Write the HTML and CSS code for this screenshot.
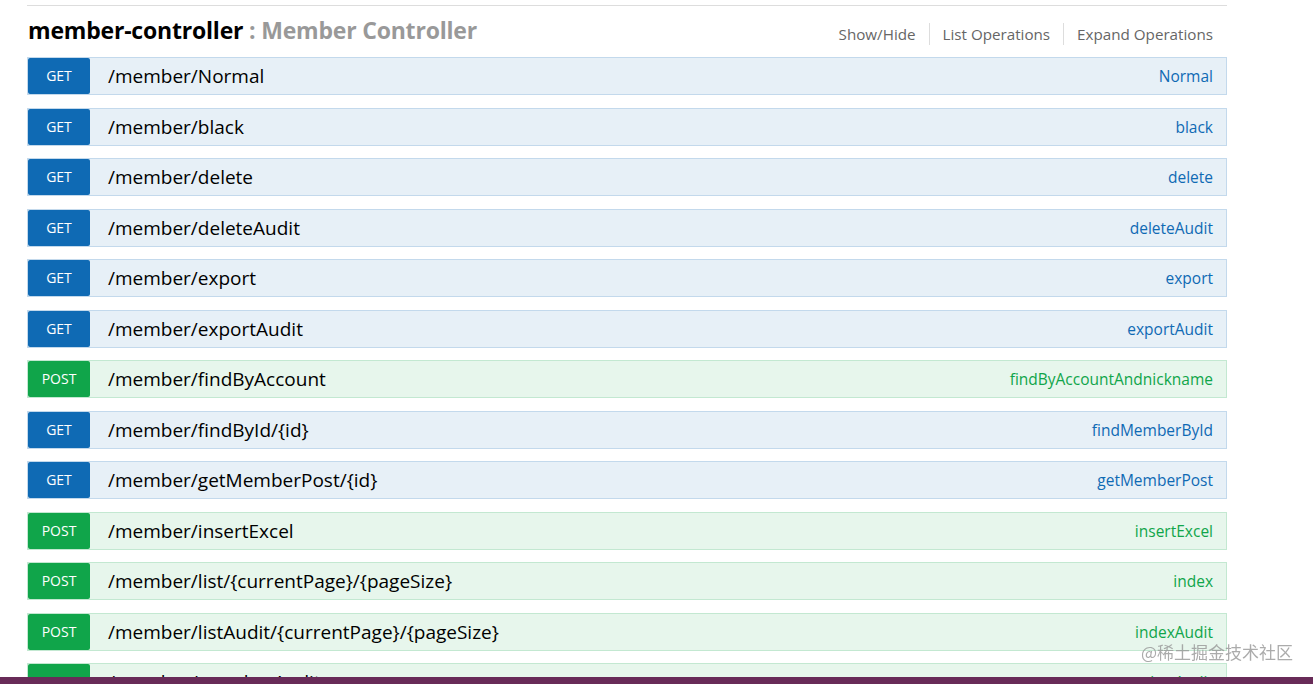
FILE: index.html
```html
<!DOCTYPE html>
<html lang="en">
<head>
    <meta charset="UTF-8">
    <title>member-controller</title>
    <link rel="stylesheet" href="styles.css">
</head>
<body>
    <div class="resource">
        <div class="heading">
            <h2><span class="name">member-controller</span><span class="desc"> : Member Controller</span></h2>
            <ul class="options">
                <li>Show/Hide</li>
                <li>List Operations</li>
                <li>Expand Operations</li>
            </ul>
        </div>

        <ul class="endpoints">
            <li class="op get"><span class="method">GET</span><span class="path">/member/Normal</span><span class="nick">Normal</span></li>
            <li class="op get"><span class="method">GET</span><span class="path">/member/black</span><span class="nick">black</span></li>
            <li class="op get"><span class="method">GET</span><span class="path">/member/delete</span><span class="nick">delete</span></li>
            <li class="op get"><span class="method">GET</span><span class="path">/member/deleteAudit</span><span class="nick">deleteAudit</span></li>
            <li class="op get"><span class="method">GET</span><span class="path">/member/export</span><span class="nick">export</span></li>
            <li class="op get"><span class="method">GET</span><span class="path">/member/exportAudit</span><span class="nick">exportAudit</span></li>
            <li class="op post"><span class="method">POST</span><span class="path">/member/findByAccount</span><span class="nick">findByAccountAndnickname</span></li>
            <li class="op get"><span class="method">GET</span><span class="path">/member/findById/{id}</span><span class="nick">findMemberById</span></li>
            <li class="op get"><span class="method">GET</span><span class="path">/member/getMemberPost/{id}</span><span class="nick">getMemberPost</span></li>
            <li class="op post"><span class="method">POST</span><span class="path">/member/insertExcel</span><span class="nick">insertExcel</span></li>
            <li class="op post"><span class="method">POST</span><span class="path">/member/list/{currentPage}/{pageSize}</span><span class="nick">index</span></li>
            <li class="op post"><span class="method">POST</span><span class="path">/member/listAudit/{currentPage}/{pageSize}</span><span class="nick">indexAudit</span></li>
            <li class="op post"><span class="method">POST</span><span class="path">/member/memberAudit</span><span class="nick">memberAudit</span></li>
        </ul>
    </div>

    <div class="watermark">@稀土掘金技术社区</div>
    <div class="bottom-bar"></div>
</body>
</html>
```

FILE: styles.css
```css
* {
    margin: 0;
    padding: 0;
    box-sizing: border-box;
}

body {
    background: #fff;
    font-family: 'Open Sans', 'Noto Sans', sans-serif;
    color: #000;
    overflow: hidden;
}

ul {
    list-style: none;
}

.resource {
    width: 1200px;
    margin-left: 27px;
    margin-top: 5px;
    border-top: 1px solid #ddd;
}

.heading {
    display: flex;
    justify-content: space-between;
    align-items: flex-end;
    height: 51px;
    padding-bottom: 11px;
}

.heading h2 {
    font-size: 23px;
    font-weight: 700;
    letter-spacing: -0.2px;
    padding-left: 1px;
}

.heading .desc {
    color: #999;
}

.options {
    display: flex;
    font-size: 15.2px;
    color: #666;
    margin-bottom: 1px;
}

.options li {
    padding: 0 13px;
    border-left: 1px solid #ddd;
    line-height: 22px;
}

.options li:first-child {
    border-left: none;
}

.options li:last-child {
    padding-right: 14px;
}

.op {
    display: flex;
    align-items: center;
    height: 38px;
    margin-bottom: 12.5px;
    border: 1px solid;
}

.op.get {
    background: #e7f0f7;
    border-color: #c3d9ec;
}

.op.post {
    background: #e7f6ec;
    border-color: #c3e8d1;
}

.method {
    width: 62px;
    height: 36px;
    line-height: 36px;
    border-radius: 2px;
    color: #fff;
    font-size: 14px;
    text-align: center;
}

.get .method {
    background: #0f6ab4;
}

.post .method {
    background: #10a54a;
}

.path {
    flex: 1;
    padding-left: 18px;
    font-size: 19px;
}

.nick {
    padding-right: 13px;
    font-size: 15.5px;
}

.get .nick {
    color: #0f6ab4;
}

.post .nick {
    color: #10a54a;
}

.watermark {
    position: fixed;
    right: 20px;
    bottom: 20px;
    font-family: 'Noto Sans CJK SC', sans-serif;
    font-size: 17px;
    color: rgba(150, 150, 150, 0.8);
}

.bottom-bar {
    position: fixed;
    left: 0;
    right: 0;
    bottom: 0;
    height: 7px;
    background: #682b58;
}
```
